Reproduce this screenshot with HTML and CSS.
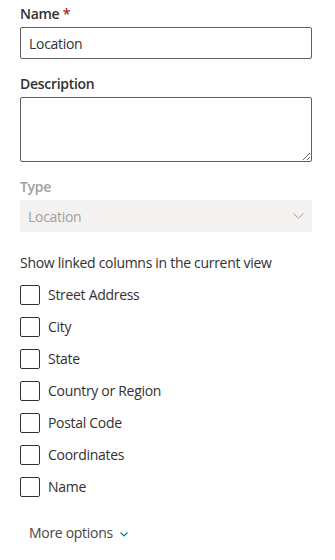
FILE: index.html
```html
<html>
<head>
<link rel="stylesheet" href="styles.css">
</head>
<body>

<div class="panel">

	<div class="field">
		<label class="field-label" for="col_name">Name <span class="req">*</span></label>
		<input type="text" id="col_name" class="text-input" value="Location"/>
	</div>

	<div class="field">
		<label class="field-label" for="col_desc">Description</label>
		<textarea id="col_desc" class="text-area"></textarea>
	</div>

	<div class="field">
		<label class="field-label disabled">Type</label>
		<div class="dropdown">
			<span>Location</span>
			<svg class="dd-chevron" width="11" height="6" viewBox="0 0 11 6"><path d="M0.5 0.5 L5.5 5.2 L10.5 0.5" fill="none" stroke="#a19f9d" stroke-width="1"/></svg>
		</div>
	</div>

	<div class="linked-title">Show linked columns in the current view</div>

	<div class="check-list">
		<label class="check-row"><span class="check-box"></span>Street Address</label>
		<label class="check-row"><span class="check-box"></span>City</label>
		<label class="check-row"><span class="check-box"></span>State</label>
		<label class="check-row"><span class="check-box"></span>Country or Region</label>
		<label class="check-row"><span class="check-box"></span>Postal Code</label>
		<label class="check-row"><span class="check-box"></span>Coordinates</label>
		<label class="check-row"><span class="check-box"></span>Name</label>
	</div>

	<div class="more-options">
		More options
		<svg class="more-chevron" width="8" height="5" viewBox="0 0 8 5"><path d="M0.5 0.5 L4 4 L7.5 0.5" fill="none" stroke="#038387" stroke-width="1.2"/></svg>
	</div>

</div>

</body>
</html>
```

FILE: styles.css
```css
body{
	margin:0;
	background:#ffffff;
	font-family:'Open Sans', 'Noto Sans', sans-serif;
	font-size:14px;
	letter-spacing:-0.3px;
	color:#323130;
}
.panel{
	width:292px;
	padding:0 23px 0 20px;
}
.field{
	margin-top:11px;
}
.field:first-child{
	margin-top:0;
}
.field-label{
	display:block;
	font-weight:600;
	font-size:14px;
	line-height:20px;
	padding:4px 0 3px;
	color:#323130;
}
.field-label.disabled{
	color:#a19f9d;
}
.req{
	color:#a4262c;
}
.text-input{
	display:block;
	box-sizing:border-box;
	width:292px;
	height:32px;
	border:1px solid #605e5c;
	border-radius:2px;
	padding:0 8px;
	font-family:'Open Sans', 'Noto Sans', sans-serif;
	font-size:14px;
	letter-spacing:-0.3px;
	color:#323130;
	outline:none;
}
.text-area{
	display:block;
	box-sizing:border-box;
	width:292px;
	height:65px;
	border:1px solid #605e5c;
	border-radius:2px;
	padding:6px 8px;
	font-family:'Open Sans', 'Noto Sans', sans-serif;
	font-size:14px;
	outline:none;
	resize:vertical;
}
.dropdown{
	box-sizing:border-box;
	height:32px;
	background:#f3f2f1;
	border-radius:2px;
	padding:0 8px;
	display:flex;
	align-items:center;
	justify-content:space-between;
	color:#a19f9d;
}
.linked-title{
	margin-top:21px;
	line-height:20px;
}
.check-list{
	margin-top:12px;
	display:flex;
	flex-direction:column;
	gap:12px;
}
.check-row{
	display:flex;
	align-items:center;
	height:20px;
	line-height:20px;
}
.check-box{
	box-sizing:border-box;
	width:20px;
	height:20px;
	border:1px solid #323130;
	border-radius:2px;
	margin-right:8px;
}
.more-options{
	margin-top:26px;
	padding-left:9px;
	display:flex;
	align-items:center;
	line-height:20px;
	color:#484644;
}
.more-chevron{
	margin-left:7px;
	margin-top:2px;
}
```
